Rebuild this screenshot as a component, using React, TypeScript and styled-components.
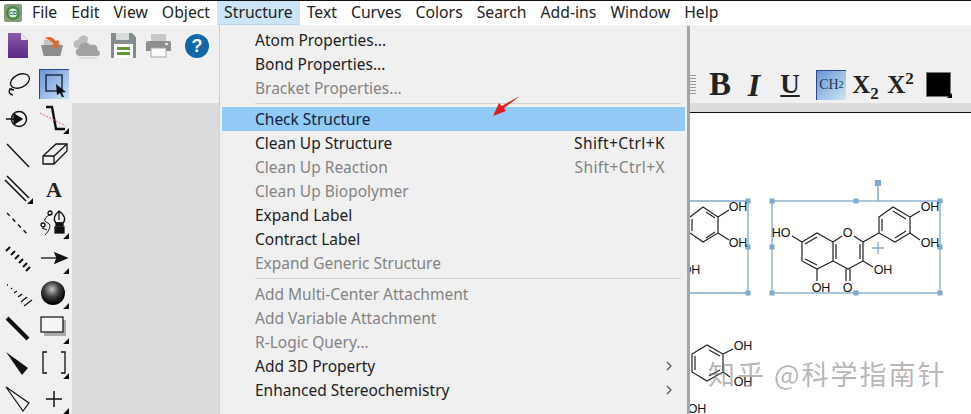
import React from "react";
import styled, { createGlobalStyle } from "styled-components";

const GlobalStyle = createGlobalStyle`
  html, body {
    margin: 0;
    padding: 0;
    background: #f0f0f0;
    overflow: hidden;
  }
  * {
    box-sizing: border-box;
  }
`;

const menuFont = `"Noto Sans", "Open Sans", sans-serif`;
const serifFont = `"Liberation Serif", "DejaVu Serif", serif`;

const Page = styled.div`
  position: relative;
  width: 971px;
  height: 414px;
  display: flex;
  flex-direction: column;
  overflow: hidden;
  border-top: 1px solid #111;
  background: #f0f0f0;
  font-family: ${menuFont};
`;

const MenuBar = styled.div`
  height: 24px;
  flex: none;
  display: flex;
  align-items: stretch;
  background: #fff;
  font-size: 15.75px;
  color: #222;
`;

const AppIcon = styled.div`
  width: 25px;
  flex: none;
  display: flex;
  align-items: center;
  justify-content: center;
`;

const MenuTitle = styled.div<{ $open?: boolean }>`
  padding: 0 7px;
  line-height: 23px;
  white-space: nowrap;
  background: ${(p) => (p.$open ? "#cce4f7" : "transparent")};
  border-bottom: ${(p) => (p.$open ? "1px solid #b5d6f0" : "none")};
`;

const IconBar = styled.div`
  height: 41px;
  flex: none;
  display: flex;
  align-items: center;
  padding: 0 0 0 8px;
  background: #f0f0f0;
`;

const IconSlot = styled.div<{ $after: number }>`
  display: flex;
  margin-right: ${(p) => p.$after}px;
`;

const Body = styled.div`
  flex: 1;
  display: flex;
  min-height: 0;
`;

const Palette = styled.div`
  width: 72px;
  flex: none;
  display: grid;
  grid-template-columns: 36px 36px;
  grid-auto-rows: 35px;
  background: #f0f0f0;
`;

const ToolCell = styled.div`
  display: flex;
  align-items: center;
  justify-content: center;
`;

const SelectedTool = styled.div`
  width: 30px;
  height: 30px;
  border-top: 1px solid #27488c;
  border-left: 1px solid #27488c;
  background: linear-gradient(135deg, #6f93d8 0%, #c9e3f3 100%);
  display: flex;
  align-items: center;
  justify-content: center;
`;

const MainColumn = styled.div`
  flex: 1;
  display: flex;
  flex-direction: column;
  min-width: 0;
`;

const FormatBar = styled.div`
  height: 37px;
  flex: none;
  display: flex;
  align-items: center;
  padding-left: 616px;
  background: #f0f0f0;
  color: #222;
  font-family: ${serifFont};
  font-weight: bold;
`;

const AlignLines = styled.div`
  width: 8px;
  height: 20px;
  margin-right: 7px;
  background: repeating-linear-gradient(
    to bottom,
    #999 0,
    #999 1px,
    transparent 1px,
    transparent 3px
  );
`;

const FormatGlyph = styled.span<{ $size: number; $width: number; $italic?: boolean; $under?: boolean }>`
  width: ${(p) => p.$width}px;
  text-align: center;
  font-size: ${(p) => p.$size}px;
  line-height: 1;
  font-style: ${(p) => (p.$italic ? "italic" : "normal")};
  text-decoration: ${(p) => (p.$under ? "underline" : "none")};
  sub,
  sup {
    font-size: 0.68em;
    line-height: 0;
  }
`;

const StyleToggle = styled.span`
  width: 30px;
  height: 30px;
  margin: 0 2px 0 7px;
  border-top: 1px solid #27488c;
  border-left: 1px solid #27488c;
  background: linear-gradient(135deg, #6f93d8 0%, #c9e9f3 100%);
  display: flex;
  align-items: center;
  justify-content: center;
  font-size: 14px;
  font-weight: normal;
  color: #17385f;
  sub {
    font-size: 0.75em;
    line-height: 0;
  }
`;

const ColorSwatch = styled.span`
  position: relative;
  width: 25px;
  height: 25px;
  margin-left: 8px;
  background: #000;
  border: 1px solid #777;
  &::after {
    content: "";
    position: absolute;
    right: -2px;
    bottom: -2px;
    border-style: solid;
    border-width: 0 0 5px 5px;
    border-color: transparent transparent #000 transparent;
  }
`;

const Workspace = styled.div`
  flex: 1;
  display: flex;
  padding: 9px 0 0 150px;
  background: #dcdcdc;
  min-height: 0;
`;

const Canvas = styled.div`
  position: relative;
  flex: 1;
  background: #fff;
  border-top: 1.5px solid #111;
`;

const Drawing = styled.svg`
  position: absolute;
  right: 0;
  top: 0;
  width: 311px;
  height: 301px;
`;

const Watermark = styled.div`
  position: absolute;
  left: 708px;
  top: 356px;
  font-family: "Noto Sans CJK SC", sans-serif;
  font-size: 27px;
  line-height: 34px;
  letter-spacing: 2px;
  white-space: nowrap;
  color: rgba(120, 120, 120, 0.55);
`;

const Dropdown = styled.div`
  position: absolute;
  left: 219px;
  top: 25px;
  width: 471px;
  height: 400px;
  padding: 2px 2px 0 2px;
  background: #f0f0f0;
  border-left: 1px solid #d0d0d0;
  border-right: 3px solid #a4a4a4;
  font-size: 15.5px;
  color: #222;
`;

const MenuRow = styled.div<{ $disabled?: boolean; $active?: boolean }>`
  height: 24px;
  display: flex;
  align-items: center;
  justify-content: space-between;
  padding: 0 20px 0 33px;
  white-space: nowrap;
  color: ${(p) => (p.$disabled ? "#838383" : p.$active ? "#10233a" : "#222")};
  background: ${(p) => (p.$active ? "#91c9f7" : "transparent")};
`;

const Shortcut = styled.span`
  letter-spacing: 0.4px;
`;

const Chevron = styled.span`
  display: flex;
  margin-right: -8px;
  color: #555;
`;

const Separator = styled.div`
  height: 1px;
  margin: 3px 4px 3px 33px;
  background: #d2d2d2;
`;

const Pointer = styled.svg`
  position: absolute;
  left: 272px;
  top: 69px;
`;

const NewDocIcon = () => (
  <svg width="20" height="25" viewBox="0 0 20 25">
    <defs>
      <linearGradient id="docFill" x1="0" y1="0" x2="0" y2="1">
        <stop offset="0" stopColor="#8a5aa8" />
        <stop offset="1" stopColor="#5a2a86" />
      </linearGradient>
    </defs>
    <path d="M0 0H13L20 7V25H0Z" fill="url(#docFill)" />
    <path d="M13 0L20 7H13Z" fill="#efe6f3" />
  </svg>
);

const OpenIcon = () => (
  <svg width="24" height="25" viewBox="0 0 26 25">
    <path d="M4 6H11L13 8H22V13H4Z" fill="#c4c4c4" />
    <path d="M1 12H25L22 24H4Z" fill="#8c8c8c" />
    <path d="M5 4C11 2 15 4 17 8L20 6L20 15L12 14L15 11C13 8 10 6 5 4Z" fill="#e0672a" />
  </svg>
);

const CloudIcon = () => (
  <svg width="30" height="26" viewBox="0 0 30 26">
    <path d="M4 15C0 13 1 7 6 7C7 2 14 1 16 5L14 15Z" fill="#bcbcbc" />
    <path d="M8 23C3 23 2 16 7 15C8 9 16 8 18 12C23 10 27 14 25 17C29 18 29 23 25 23Z" fill="#a2a2a2" />
    <ellipse cx="16" cy="25" rx="10" ry="1" fill="#d8d8d8" />
  </svg>
);

const SaveIcon = () => (
  <svg width="25" height="25" viewBox="0 0 25 25">
    <path d="M0 0H21L25 4V25H0Z" fill="#838d8d" />
    <rect x="5" y="0" width="13" height="7" fill="#d8dcdc" />
    <rect x="3" y="11" width="19" height="14" fill="#fff" />
    <rect x="6" y="14" width="13" height="3" fill="#5c9a36" />
    <rect x="6" y="19" width="13" height="3" fill="#5c9a36" />
  </svg>
);

const PrintIcon = () => (
  <svg width="25" height="25" viewBox="0 0 25 25">
    <rect x="5" y="1" width="15" height="8" fill="#c8c8c8" />
    <path d="M2 8H23Q25 8 25 10V18H0V10Q0 8 2 8Z" fill="#8e8e8e" />
    <rect x="5" y="15" width="15" height="9" fill="#fafafa" stroke="#a5a5a5" />
    <rect x="19" y="10" width="3" height="2" fill="#e2e2e2" />
  </svg>
);

const HelpIcon = () => (
  <svg width="24" height="24" viewBox="0 0 24 24">
    <circle cx="12" cy="12" r="12" fill="#0f66a8" />
    <text x="12" y="18" textAnchor="middle" fontFamily="Liberation Sans, sans-serif" fontWeight="bold" fontSize="18" fill="#fff">
      ?
    </text>
  </svg>
);

const Corner = () => <path d="M30 30H25L30 25Z" fill="#000" />;

const Tool = ({ children, corner }: { children: React.ReactNode; corner?: boolean }) => (
  <svg width="30" height="30" viewBox="0 0 30 30" fill="none" stroke="#111" strokeWidth="1.3">
    {children}
    {corner && <Corner />}
  </svg>
);

const tools: { key: string; corner?: boolean; shape: React.ReactNode }[] = [
  {
    key: "lasso",
    shape: (
      <>
        <ellipse cx="17" cy="12" rx="10" ry="6.5" transform="rotate(-25 17 12)" />
        <path d="M9 19C5 21 5 25 10 26M6 20L11 21" />
      </>
    ),
  },
  { key: "select", shape: null },
  {
    key: "orbital",
    shape: (
      <>
        <circle cx="16" cy="15" r="7.5" strokeWidth="1.5" />
        <path d="M3 15H13" strokeWidth="1.5" />
        <path d="M11 10L19 15L11 20Z" fill="#111" />
      </>
    ),
  },
  {
    key: "bondLine",
    corner: true,
    shape: (
      <>
        <path d="M7 3H13L17 25H26" strokeWidth="2.4" />
        <path d="M1 9L27 22" stroke="#e06060" strokeWidth="1" strokeDasharray="2 1.5" />
      </>
    ),
  },
  { key: "single", shape: <path d="M4 5L26 28" strokeWidth="1.4" /> },
  {
    key: "eraser",
    shape: (
      <>
        <path d="M4 17L17 5H28V12L15 25H4Z" />
        <path d="M4 17H15L28 5M15 17V25" />
      </>
    ),
  },
  {
    key: "double",
    corner: true,
    shape: <path d="M4 2L26 24M2 6L23 27" strokeWidth="1.6" />,
  },
  {
    key: "text",
    shape: (
      <text x="15" y="23" textAnchor="middle" fontFamily="Liberation Serif, serif" fontWeight="bold" fontSize="22" fill="#222" stroke="none">
        A
      </text>
    ),
  },
  { key: "dashed", shape: <path d="M4 4L26 27" strokeWidth="1.4" strokeDasharray="4 4" /> },
  {
    key: "pen",
    corner: true,
    shape: (
      <>
        <path d="M20 2C15 6 14 11 17 14H24C27 11 26 6 20 2ZM20 3V11" />
        <rect x="17" y="14" width="7" height="3" fill="#111" />
        <rect x="16" y="18" width="9" height="6" fill="#111" />
        <circle cx="11" cy="4" r="2" />
        <circle cx="4" cy="16" r="2" />
        <path d="M12 5C6 8 3 12 9 14C13 16 10 22 6 26M3 19L8 21" strokeWidth="1" />
      </>
    ),
  },
  {
    key: "hashed",
    shape: <path d="M7 3L3 7M12 7L8 11M16 11L12 15M20 15L16 19M24 19L20 23M27 23L23 27" strokeWidth="2" />,
  },
  {
    key: "arrow",
    corner: true,
    shape: (
      <>
        <path d="M2 14H20" />
        <path d="M16 9L28 14L16 19L18 14Z" fill="#111" />
      </>
    ),
  },
  {
    key: "hashedWedge",
    shape: <path d="M4 6H5M8 10L9 9M11 14L14 12M15 18L19 15M18 23L24 18M21 27L29 21" />,
  },
  {
    key: "sphere",
    corner: true,
    shape: (
      <>
        <defs>
          <radialGradient id="ball" cx="0.45" cy="0.35" r="0.6">
            <stop offset="0" stopColor="#c8c8c8" />
            <stop offset="0.5" stopColor="#444" />
            <stop offset="1" stopColor="#000" />
          </radialGradient>
        </defs>
        <circle cx="14" cy="14" r="12" fill="url(#ball)" stroke="none" />
      </>
    ),
  },
  { key: "bold", shape: <path d="M4 4L25 25" strokeWidth="4" /> },
  {
    key: "shadowBox",
    corner: true,
    shape: (
      <>
        <rect x="5" y="6" width="22" height="16" fill="#aaa" stroke="none" />
        <rect x="2" y="3" width="22" height="15" fill="#f5f5f5" strokeWidth="1.2" />
      </>
    ),
  },
  { key: "wedge", shape: <path d="M3 3L25 19L19 26Z" fill="#111" stroke="none" /> },
  {
    key: "bracket",
    corner: true,
    shape: <path d="M8 3H4V24H8M22 3H26V24H22" />,
  },
  { key: "hollowWedge", shape: <path d="M3 3L26 19L20 27Z" strokeWidth="1.2" /> },
  {
    key: "plus",
    corner: true,
    shape: <path d="M15 7V23M7 15H23" strokeWidth="1.5" />,
  },
];

const topMenus = ["File", "Edit", "View", "Object", "Structure", "Text", "Curves", "Colors", "Search", "Add-ins", "Window", "Help"];

type MenuEntry =
  | "sep"
  | { label: string; disabled?: boolean; active?: boolean; shortcut?: string; more?: boolean };

const structureMenu: MenuEntry[] = [
  { label: "Atom Properties..." },
  { label: "Bond Properties..." },
  { label: "Bracket Properties...", disabled: true },
  "sep",
  { label: "Check Structure", active: true },
  { label: "Clean Up Structure", shortcut: "Shift+Ctrl+K" },
  { label: "Clean Up Reaction", shortcut: "Shift+Ctrl+X", disabled: true },
  { label: "Clean Up Biopolymer", disabled: true },
  { label: "Expand Label" },
  { label: "Contract Label" },
  { label: "Expand Generic Structure", disabled: true },
  "sep",
  { label: "Add Multi-Center Attachment", disabled: true },
  { label: "Add Variable Attachment", disabled: true },
  { label: "R-Logic Query...", disabled: true },
  { label: "Add 3D Property", more: true },
  { label: "Enhanced Stereochemistry", more: true },
];

const Atom = ({ x, y, children }: { x: number; y: number; children: string }) => (
  <text x={x} y={y + 4.5} textAnchor="middle" fontFamily="Liberation Sans, sans-serif" fontSize="12.5" fill="#111" stroke="none">
    {children}
  </text>
);

const Handle = ({ x, y, s = 5 }: { x: number; y: number; s?: number }) => (
  <rect x={x - s / 2} y={y - s / 2} width={s} height={s} fill="#7fa9cc" stroke="none" />
);

const Molecules = () => (
  <Drawing viewBox="660 113 311 301" fill="none" stroke="#222" strokeWidth="1.2">
    {/* left selection, its left part lies under the menu */}
    <path d="M670 201H748V293H670" stroke="#7fa9cc" strokeWidth="1.3" />
    <Handle x={748} y={201} />
    <Handle x={748} y={247} />
    <Handle x={748} y={293} />
    <path d="M690 217L703 207L718 217V233L703 242L690 233M706 212L715 218M715 232L706 238M692 219V231M718 217L729 210M718 233L729 240" />
    <Atom x={738} y={206}>OH</Atom>
    <Atom x={738} y={242}>OH</Atom>
    <Atom x={691} y={269}>OH</Atom>

    {/* selected flavonoid */}
    <path d="M878 183V201" stroke="#7fa9cc" strokeWidth="1.5" />
    <Handle x={878} y={183} s={6} />
    <rect x="772" y="201" width="168" height="92" stroke="#7fa9cc" strokeWidth="1.3" />
    <Handle x={772} y={201} />
    <Handle x={856} y={201} />
    <Handle x={940} y={201} />
    <Handle x={772} y={247} />
    <Handle x={940} y={247} />
    <Handle x={772} y={293} />
    <Handle x={856} y={293} />
    <Handle x={940} y={293} />
    <path d="M878 242V254M872 248H884" stroke="#7fa9cc" strokeWidth="1.3" />
    <path d="M879 217L893 207L910 217V233L895 242L879 233ZM893 211L906 219M906 231L895 238M882 219V231" />
    <path d="M910 217L920 211M910 233L920 240M879 233L863 242" />
    <path d="M863 242V261L848 269L833 261V242L817 233L802 242V261L817 269L833 261M817 237L805 244M805 259L817 265M836 244V259M860 244V259" />
    <path d="M833 242L842 236M854 236L863 242M802 242L792 236M817 269V281M863 261L873 267M846 269V281M850 269V281" />
    <Atom x={847.5} y={232}>O</Atom>
    <Atom x={781} y={232}>HO</Atom>
    <Atom x={930} y={206}>OH</Atom>
    <Atom x={930} y={242}>OH</Atom>
    <Atom x={883} y={269}>OH</Atom>
    <Atom x={821} y={287}>OH</Atom>
    <Atom x={847.5} y={287}>O</Atom>

    {/* lower structure */}
    <path d="M692 354L707 345L723 354V372L707 381L692 372ZM709 350L720 356M720 370L709 376M695 356V370M723 354L733 349M723 372L730 377" />
    <Atom x={743} y={345}>OH</Atom>
    <Atom x={743} y={381}>OH</Atom>
    <Atom x={697} y={408}>OH</Atom>
  </Drawing>
);

export default function App() {
  return (
    <>
      <GlobalStyle />
      <Page>
        <MenuBar>
          <AppIcon>
            <svg width="20" height="20" viewBox="0 0 20 20">
              <rect x="1" y="1" width="18" height="18" rx="2" fill="#8a9a7a" />
              <circle cx="10" cy="10" r="7" fill="#3e8a4a" />
              <circle cx="10" cy="10" r="4.5" fill="#dff0d8" />
              <text x="10" y="12" textAnchor="middle" fontFamily="Liberation Sans, sans-serif" fontWeight="bold" fontSize="6" fill="#2f6a3a">
                CD
              </text>
            </svg>
          </AppIcon>
          {topMenus.map((m) => (
            <MenuTitle key={m} $open={m === "Structure"}>
              {m}
            </MenuTitle>
          ))}
        </MenuBar>
        <IconBar>
          <IconSlot $after={12}><NewDocIcon /></IconSlot>
          <IconSlot $after={8}><OpenIcon /></IconSlot>
          <IconSlot $after={9}><CloudIcon /></IconSlot>
          <IconSlot $after={10}><SaveIcon /></IconSlot>
          <IconSlot $after={14}><PrintIcon /></IconSlot>
          <HelpIcon />
        </IconBar>
        <Body>
          <Palette>
            {tools.map((t) => (
              <ToolCell key={t.key}>
                {t.key === "select" ? (
                  <SelectedTool>
                    <svg width="26" height="26" viewBox="0 0 26 26" fill="none">
                      <rect x="4" y="4" width="16" height="16" stroke="#12253f" strokeWidth="1.4" />
                      <path d="M14 13L24 21L20 21.5L22 26L20 26L18 22L15 24Z" fill="#111" />
                    </svg>
                  </SelectedTool>
                ) : (
                  <Tool corner={t.corner}>{t.shape}</Tool>
                )}
              </ToolCell>
            ))}
          </Palette>
          <MainColumn>
            <FormatBar>
              <AlignLines />
              <FormatGlyph $size={33} $width={34}>B</FormatGlyph>
              <FormatGlyph $size={32} $width={34} $italic>I</FormatGlyph>
              <FormatGlyph $size={27} $width={38} $under>U</FormatGlyph>
              <StyleToggle>
                CH<sub>2</sub>
              </StyleToggle>
              <FormatGlyph $size={25} $width={35}>
                X<sub>2</sub>
              </FormatGlyph>
              <FormatGlyph $size={25} $width={35}>
                X<sup>2</sup>
              </FormatGlyph>
              <ColorSwatch />
            </FormatBar>
            <Workspace>
              <Canvas>
                <Molecules />
              </Canvas>
            </Workspace>
          </MainColumn>
        </Body>
        <Dropdown>
          {structureMenu.map((entry, i) =>
            entry === "sep" ? (
              <Separator key={i} />
            ) : (
              <MenuRow key={entry.label} $disabled={entry.disabled} $active={entry.active}>
                <span>{entry.label}</span>
                {entry.shortcut && <Shortcut>{entry.shortcut}</Shortcut>}
                {entry.more && (
                  <Chevron>
                    <svg width="8" height="12" viewBox="0 0 8 12" fill="none" stroke="currentColor" strokeWidth="1.2">
                      <path d="M2 2L6 6L2 10" />
                    </svg>
                  </Chevron>
                )}
              </MenuRow>
            )
          )}
          <Pointer width="30" height="24" viewBox="0 0 30 24">
            <path d="M28 1C22 6 17 9 12 13L14 16L1 21L7 8L10 11C15 8 22 4 28 1Z" fill="#e02020" />
          </Pointer>
        </Dropdown>
        <Watermark>知乎 @科学指南针</Watermark>
      </Page>
    </>
  );
}
